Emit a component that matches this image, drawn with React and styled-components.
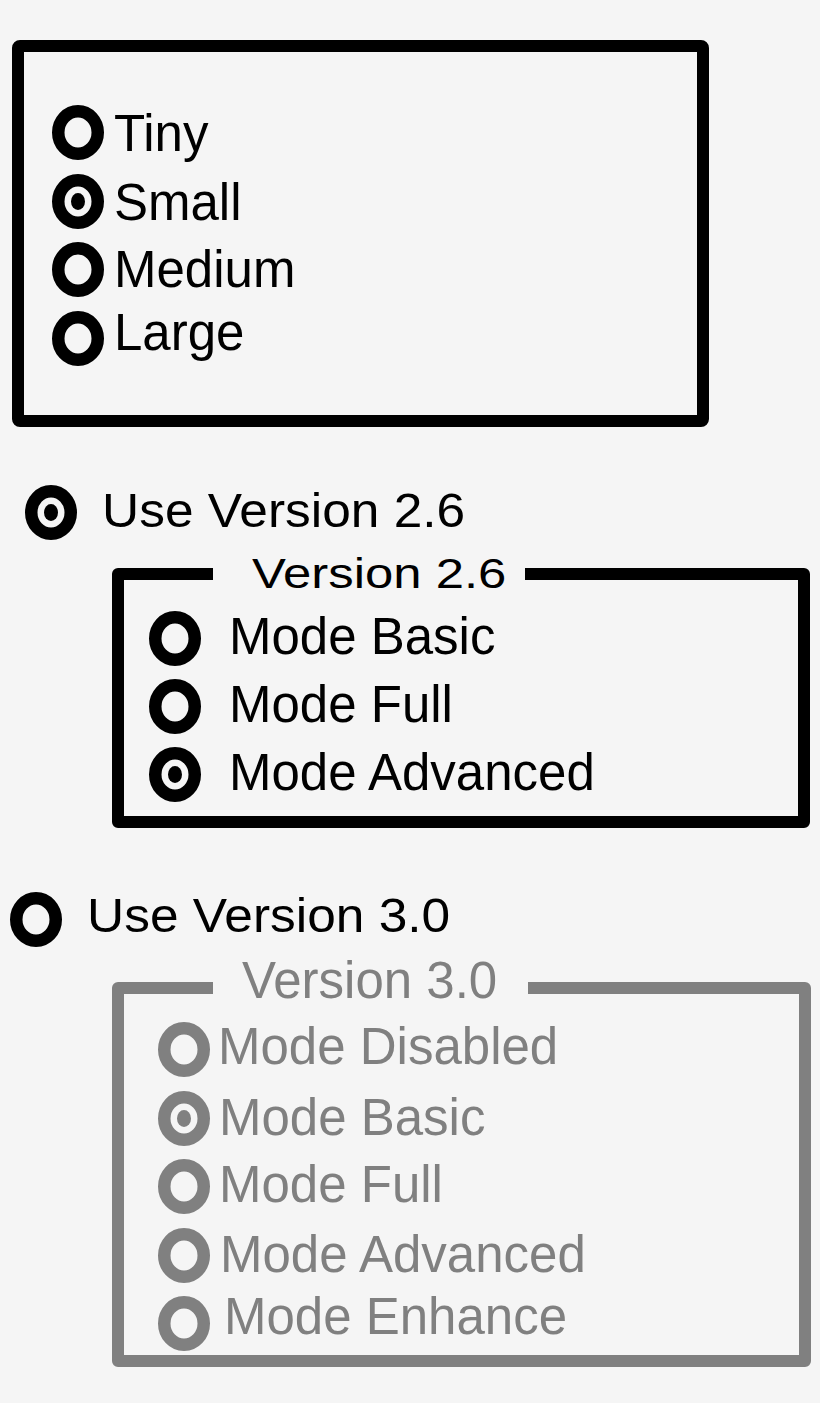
import React from 'react'
import styled, { createGlobalStyle } from 'styled-components'

const INK = '#000'
const MUTED = '#808080'

const GlobalStyle = createGlobalStyle`
  html, body {
    margin: 0;
    padding: 0;
    background: #f5f5f5;
  }
  body {
    font-family: 'Liberation Sans', Arial, sans-serif;
  }
`

const sizes = [
  { label: 'Tiny', dy: 1 },
  { label: 'Small', checked: true, dy: 1 },
  { label: 'Medium', dy: 0 },
  { label: 'Large', dy: -6 }
]

const modes26 = [
  { label: 'Mode Basic', dy: -2 },
  { label: 'Mode Full', dy: -2 },
  { label: 'Mode Advanced', checked: true, dy: -2 }
]

const modes30 = [
  { label: 'Mode Disabled', dy: -3, gap: 8 },
  { label: 'Mode Basic', checked: true, dy: -1, gap: 9 },
  { label: 'Mode Full', dy: -2, gap: 9 },
  { label: 'Mode Advanced', dy: -1, gap: 10 },
  { label: 'Mode Enhance', dy: -7, gap: 14 }
]

const Page = styled.div`
  display: flex;
  flex-direction: column;
  align-items: flex-start;
  width: 820px;
  min-height: 1403px;
  padding-top: 40px;
  box-sizing: border-box;
  color: ${INK};
`

const SizeBox = styled.div`
  box-sizing: border-box;
  width: 697px;
  height: 387px;
  margin-left: 12px;
  border: 12px solid ${INK};
  border-radius: 8px;
  padding: 53px 0 0 28px;
  display: flex;
  flex-direction: column;
  gap: 13.7px;
`

const Row = styled.div`
  display: flex;
  align-items: center;
  height: 55px;
  gap: ${p => p.$gap}px;
  margin: ${p => p.$mt || 0}px 0 0 ${p => p.$ml || 0}px;
  color: ${p => (p.$muted ? MUTED : INK)};
`

const Label = styled.span`
  font-size: ${p => p.$size || 51}px;
  line-height: 1;
  white-space: nowrap;
  transform: translateY(${p => p.$dy || 0}px) scaleX(${p => p.$sx || 1});
  transform-origin: left center;
`

const RadioSvg = styled.svg`
  flex: none;
  display: block;
`

const Group = styled.fieldset`
  box-sizing: border-box;
  width: ${p => p.$width}px;
  min-width: 0;
  margin: ${p => p.$mt}px 0 0 112px;
  padding: 0;
  border: 12px solid ${p => (p.$muted ? MUTED : INK)};
  border-radius: 6px;
  color: ${p => (p.$muted ? MUTED : INK)};
`

const Legend = styled.legend`
  width: ${p => p.$width}px;
  margin-left: 89px;
  padding: 0;
  font-size: ${p => p.$size}px;
  line-height: ${p => p.$size}px;
  white-space: nowrap;
`

const LegendText = styled.span`
  display: inline-block;
  margin-left: ${p => p.$indent}px;
  transform: translateY(${p => p.$dy || 0}px) scaleX(${p => p.$sx || 1});
  transform-origin: left center;
`

const GroupBody = styled.div`
  display: flex;
  flex-direction: column;
  gap: ${p => p.$gap}px;
  padding: ${p => p.$pad};
`

function Radio ({ checked }) {
  return (
    <RadioSvg width='52' height='55' viewBox='0 0 52 55'>
      <ellipse cx='26' cy='27.5' rx='19.75' ry='21.25' fill='none' stroke='currentColor' strokeWidth='12.5' />
      {checked && <ellipse cx='26' cy='27.5' rx='7' ry='8.5' fill='currentColor' />}
    </RadioSvg>
  )
}

function Option ({ item, gap, muted }) {
  return (
    <Row $gap={item.gap || gap} $muted={muted}>
      <Radio checked={item.checked} />
      <Label $dy={item.dy}>{item.label}</Label>
    </Row>
  )
}

export default function App () {
  return (
    <>
      <GlobalStyle />
      <Page>
        <SizeBox>
          {sizes.map(s => <Option key={s.label} item={s} gap={10} />)}
        </SizeBox>

        <Row $gap={25} $mt={58} $ml={25}>
          <Radio checked />
          <Label $size={49} $sx={1.05} $dy={-2}>Use Version 2.6</Label>
        </Row>
        <Group $width={698} $mt={12.5}>
          <Legend $width={312} $size={42}>
            <LegendText $indent={39} $sx={1.21}>Version 2.6</LegendText>
          </Legend>
          <GroupBody $gap={13} $pad='16.5px 0 14px 25px'>
            {modes26.map(m => <Option key={m.label} item={m} gap={28} />)}
          </GroupBody>
        </Group>

        <Row $gap={25} $mt={64} $ml={10}>
          <Radio />
          <Label $size={49} $sx={1.05} $dy={-4}>Use Version 3.0</Label>
        </Row>
        <Group $width={699} $mt={15} $muted>
          <Legend $width={315} $size={51}>
            <LegendText $indent={29} $dy={-7}>Version 3.0</LegendText>
          </Legend>
          <GroupBody $gap={13.5} $pad='9px 0 4px 34px'>
            {modes30.map(m => <Option key={m.label} item={m} gap={9} muted />)}
          </GroupBody>
        </Group>
      </Page>
    </>
  )
}
